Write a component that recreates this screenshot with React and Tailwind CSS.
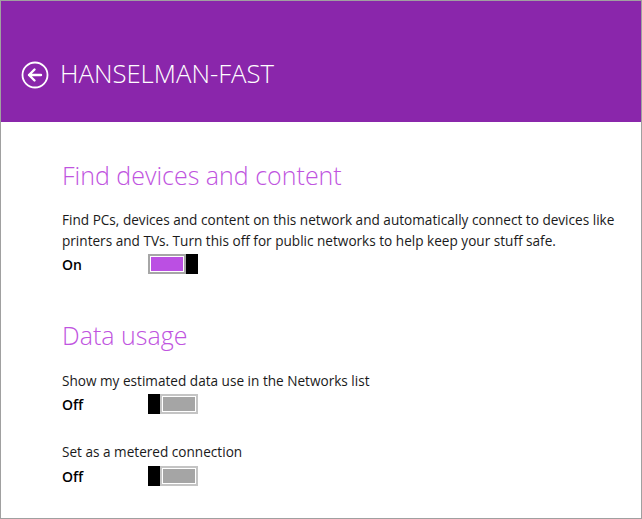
export default function App() {
  const Toggle = ({ on }) => (
    <div className="flex h-[20px] w-[50px]">
      {on ? (
        <>
          <div className="flex-1 border-2 border-[#a6a6a6] bg-white p-px">
            <div className="h-full w-full bg-[#bb4fe3]" />
          </div>
          <div className="w-[12px] bg-black" />
        </>
      ) : (
        <>
          <div className="w-[12px] bg-black" />
          <div className="flex-1 border-2 border-[#c4c4c4] bg-white p-px">
            <div className="h-full w-full bg-[#a5a5a5]" />
          </div>
        </>
      )}
    </div>
  );
  const Row = ({ label, on }) => (
    <div className="flex items-center h-[22px]">
      <div className="w-[86px] text-[14px] font-semibold text-black">{label}</div>
      <Toggle on={on} />
    </div>
  );
  return (
    <div
      className="w-[642px] h-[519px] border border-[#a0a0a0] bg-white overflow-hidden"
      style={{ fontFamily: '"Open Sans", "Noto Sans", sans-serif' }}
    >
      <div className="h-[121px] bg-[#8a26ab] flex items-center pl-[20px] pt-[26px]">
        <svg width="28" height="28" viewBox="0 0 28 28" fill="none" stroke="white">
          <circle cx="14" cy="14" r="12.5" strokeWidth="1.8" />
          <path d="M8 14h12M13.5 8.5L8 14l5.5 5.5" strokeWidth="2.4" strokeLinecap="round" strokeLinejoin="round" />
        </svg>
        <span className="ml-[11px] mb-[2px] text-[25.7px] font-light text-white leading-none">HANSELMAN-FAST</span>
      </div>
      <div className="pl-[61px] pr-[14px]">
        <div className="mt-[35px] text-[25px] font-light text-[#c054e0] leading-[36px]">Find devices and content</div>
        <div className="mt-[16px] text-[13.6px] leading-[21px] text-[#1a1a1a]">
          Find PCs, devices and content on this network and automatically connect to devices like printers and TVs. Turn this off for public networks to help keep your stuff safe.
        </div>
        <div className="mt-[2px]"><Row label="On" on /></div>
        <div className="mt-[42px] text-[25px] font-light text-[#c054e0] leading-[36px]">Data usage</div>
        <div className="mt-[17px] text-[13.6px] leading-[21px] text-[#1a1a1a]">Show my estimated data use in the Networks list</div>
        <div className="mt-[2px]"><Row label="Off" /></div>
        <div className="mt-[26px] text-[13.6px] leading-[21px] text-[#1a1a1a]">Set as a metered connection</div>
        <div className="mt-[3px]"><Row label="Off" /></div>
      </div>
    </div>
  );
}
